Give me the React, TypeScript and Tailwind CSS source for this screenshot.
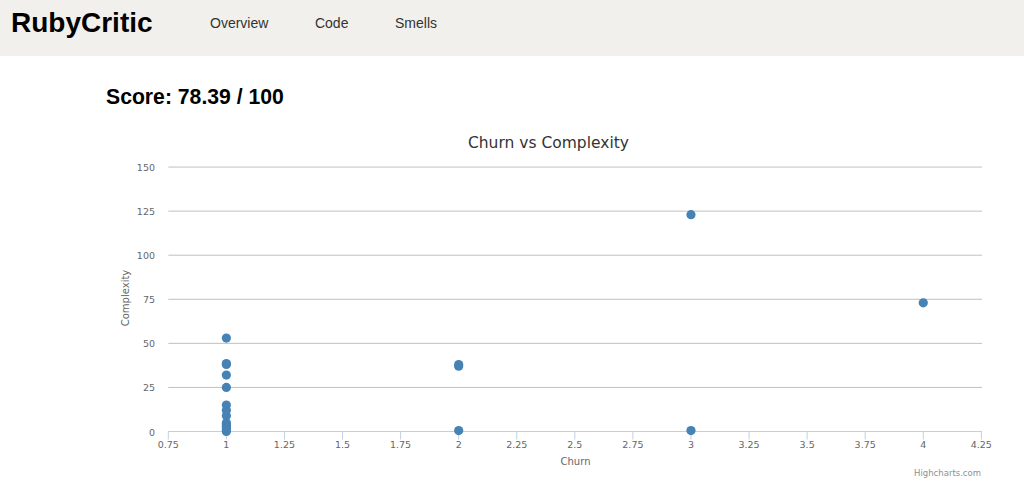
const X0 = 168.3;
const X_UNIT = 232.3;
const Y0 = 431.5;
const Y_UNIT = 1.763;

const xTicks = ['0.75', '1', '1.25', '1.5', '1.75', '2', '2.25', '2.5', '2.75', '3', '3.25', '3.5', '3.75', '4', '4.25'];
const yTicks = [0, 25, 50, 75, 100, 125, 150];

// [churn, complexity]
const points: [number, number][] = [
  [1, 53], [1, 38.5], [1, 38], [1, 32], [1, 25], [1, 15], [1, 12], [1, 9], [1, 5], [1, 4], [1, 3], [1, 2], [1, 1], [1, 0],
  [2, 38], [2, 37], [2, 0.5],
  [3, 123], [3, 0.5],
  [4, 73],
];

const xPos = (v: number) => X0 + (v - 0.75) * X_UNIT;
const yPos = (v: number) => Y0 - v * Y_UNIT;

function Chart() {
  return (
    <svg width="1024" height="364" viewBox="0 125 1024 364" className="block" style={{ fontFamily: '"DejaVu Sans", sans-serif' }}>
      <text x="548.5" y="148" textAnchor="middle" fontSize="15.5" fill="#333333">Churn vs Complexity</text>
      {yTicks.map(t => (
        <g key={t}>
          {t > 0 && <line x1={X0} x2="982" y1={yPos(t)} y2={yPos(t)} stroke="#c0c0c0" strokeWidth="1" />}
          <text x="155" y={yPos(t) + 4} textAnchor="end" fontSize="9.5" fill="#666666">{t}</text>
        </g>
      ))}
      <line x1={X0} x2="982" y1={Y0} y2={Y0} stroke="#c0d0e0" strokeWidth="1" />
      {xTicks.map(t => {
        const x = xPos(parseFloat(t));
        return (
          <g key={t}>
            <line x1={x} x2={x} y1={Y0} y2={Y0 + 8} stroke="#c0d0e0" strokeWidth="1" />
            <text x={x} y={448} textAnchor="middle" fontSize="9.5" fill="#666666">{t}</text>
          </g>
        );
      })}
      <text x="575.5" y="465" textAnchor="middle" fontSize="10" fill="#666666">Churn</text>
      <text transform="translate(128.5 298) rotate(-90)" textAnchor="middle" fontSize="10" fill="#666666">Complexity</text>
      {points.map(([c, v], i) => (
        <circle key={i} cx={xPos(c)} cy={yPos(v)} r="4.6" fill="#4682b4" />
      ))}
      <text x="981" y="476" textAnchor="end" fontSize="8.5" fill="#909090">Highcharts.com</text>
    </svg>
  );
}

export default function App() {
  return (
    <div className="w-[1024px] h-[499px] overflow-hidden bg-white font-['Liberation_Sans',Arial,sans-serif]">
      <nav className="h-[56px] pb-[10px] bg-[#f2f0ed] flex items-center pl-[11px]">
        <span className="text-[28px] font-bold text-black leading-none w-[199px]">RubyCritic</span>
        <ul className="flex gap-[46.6px] text-[14px] text-[#333333]">
          <li>Overview</li>
          <li>Code</li>
          <li>Smells</li>
        </ul>
      </nav>
      <h2 className="pl-[106px] pt-[28px] h-[69px] text-[21.2px] leading-[25px] font-bold text-black">Score: 78.39 / 100</h2>
      <Chart />
    </div>
  );
}
